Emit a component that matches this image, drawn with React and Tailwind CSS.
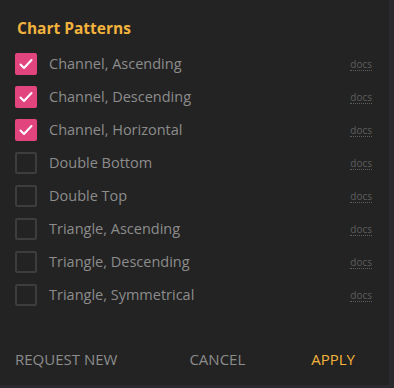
import React, { useState } from "react";

const patterns = [
    { name: "Channel, Ascending", checked: true },
    { name: "Channel, Descending", checked: true },
    { name: "Channel, Horizontal", checked: true },
    { name: "Double Bottom", checked: false },
    { name: "Double Top", checked: false },
    { name: "Triangle, Ascending", checked: false },
    { name: "Triangle, Descending", checked: false },
    { name: "Triangle, Symmetrical", checked: false },
];

const App = () => {
    const [items, setItems] = useState(patterns);

    const toggle = (i) => {
        setItems(items.map((it, idx) => (idx === i ? { ...it, checked: !it.checked } : it)));
    };

    return (
        <div className="w-[394px] h-[388px] bg-[#2a2a2e] flex" style={{ fontFamily: '"Open Sans", "Noto Sans", sans-serif' }}>
            <div className="w-[389px] h-[385px] bg-[#232323] flex flex-col">
                <h2 className="text-[15.5px] font-bold text-[#f2b33d] pl-[17px] pt-[17px] leading-[22px]">Chart Patterns</h2>
                <div className="flex flex-col pt-[14px] gap-[11px]">
                    {items.map((it, i) => (
                        <div key={it.name} className="flex items-center h-[22px] pl-[15px] pr-[17px]">
                            <button
                                onClick={() => toggle(i)}
                                className={
                                    it.checked
                                        ? "w-[22px] h-[22px] rounded-[2px] bg-[#e2447d] flex items-center justify-center"
                                        : "w-[22px] h-[22px] rounded-[2px] border-2 border-[#3d3d3d]"
                                }
                            >
                                {it.checked && (
                                    <svg width="16" height="16" viewBox="0 0 16 16" fill="none">
                                        <path d="M2.5 8.5 L6 12 L13.5 4" stroke="#fff" strokeWidth="2" strokeLinecap="round" strokeLinejoin="round" />
                                    </svg>
                                )}
                            </button>
                            <span className="ml-[12px] text-[14.5px] text-[#8c8c8c]">{it.name}</span>
                            <a className="ml-auto text-[10px] text-[#5e5e5e] border-b border-dotted border-[#5e5e5e] leading-[12px]">docs</a>
                        </div>
                    ))}
                </div>
                <div className="mt-auto flex items-center h-[50px] mb-[1px] text-[15px]">
                    <button className="pl-[15px] text-[#8c8c8c]">REQUEST NEW</button>
                    <button className="ml-[72px] text-[#8c8c8c]">CANCEL</button>
                    <button className="ml-[66px] text-[#f2b33d]">APPLY</button>
                </div>
            </div>
        </div>
    );
};

export default App;
